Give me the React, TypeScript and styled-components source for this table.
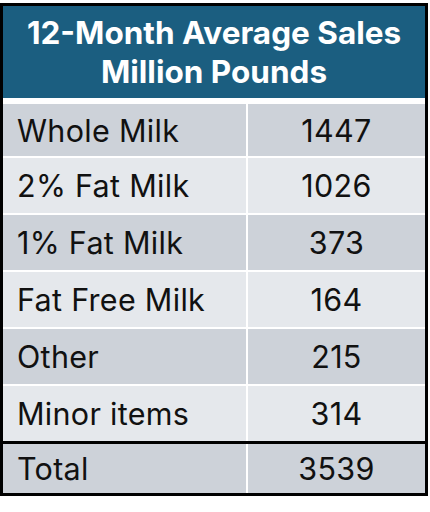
import React from "react";
import styled, { createGlobalStyle } from "styled-components";

const Global = createGlobalStyle`
  html, body { margin: 0; padding: 0; background: #ffffff; }
  body { font-family: "Inter", "Open Sans", sans-serif; }
`;

const Frame = styled.div`
  margin-top: 3px;
  width: 428px;
  box-sizing: border-box;
  border: 3px solid #000;
  background: #ffffff;
  display: flex;
  flex-direction: column;
`;

const Header = styled.div`
  height: 92px;
  background: #1b5e80;
  color: #ffffff;
  font-weight: 700;
  font-size: 31.5px;
  line-height: 39px;
  text-align: center;
  display: flex;
  flex-direction: column;
  justify-content: center;
  border-bottom: 6px solid #ffffff;
`;

const Body = styled.div`
  display: flex;
  flex-direction: column;
  gap: 2px;
`;

const Row = styled.div<{ $h: number; $total?: boolean }>`
  display: grid;
  grid-template-columns: 243px 1fr;
  column-gap: 2px;
  height: ${(p) => p.$h}px;
  border-top: ${(p) => (p.$total ? "3px solid #000" : "none")};
  margin-top: ${(p) => (p.$total ? "-2px" : "0")};
`;

const Cell = styled.div<{ $shade: "dark" | "light"; $center?: boolean }>`
  background: ${(p) => (p.$shade === "dark" ? "#cdd2d9" : "#e5e8ec")};
  color: #111111;
  font-size: 30.5px;
  letter-spacing: 0.3px;
  display: flex;
  align-items: center;
  justify-content: ${(p) => (p.$center ? "center" : "flex-start")};
  padding-left: ${(p) => (p.$center ? "0" : "14px")};
`;

const rows: [string, string][] = [
  ["Whole Milk", "1447"],
  ["2% Fat Milk", "1026"],
  ["1% Fat Milk", "373"],
  ["Fat Free Milk", "164"],
  ["Other", "215"],
  ["Minor items", "314"],
];

export default function App() {
  return (
    <>
      <Global />
      <Frame>
        <Header>
          <div>12-Month Average Sales</div>
          <div>Million Pounds</div>
        </Header>
        <Body>
          {rows.map(([name, val], i) => {
            const shade = i % 2 === 0 ? "dark" : "light";
            return (
              <Row key={name} $h={i === 0 ? 52 : 55}>
                <Cell $shade={shade}>{name}</Cell>
                <Cell $shade={shade} $center>
                  {val}
                </Cell>
              </Row>
            );
          })}
          <Row $h={49} $total>
            <Cell $shade="dark">Total</Cell>
            <Cell $shade="dark" $center>
              3539
            </Cell>
          </Row>
        </Body>
      </Frame>
    </>
  );
}
